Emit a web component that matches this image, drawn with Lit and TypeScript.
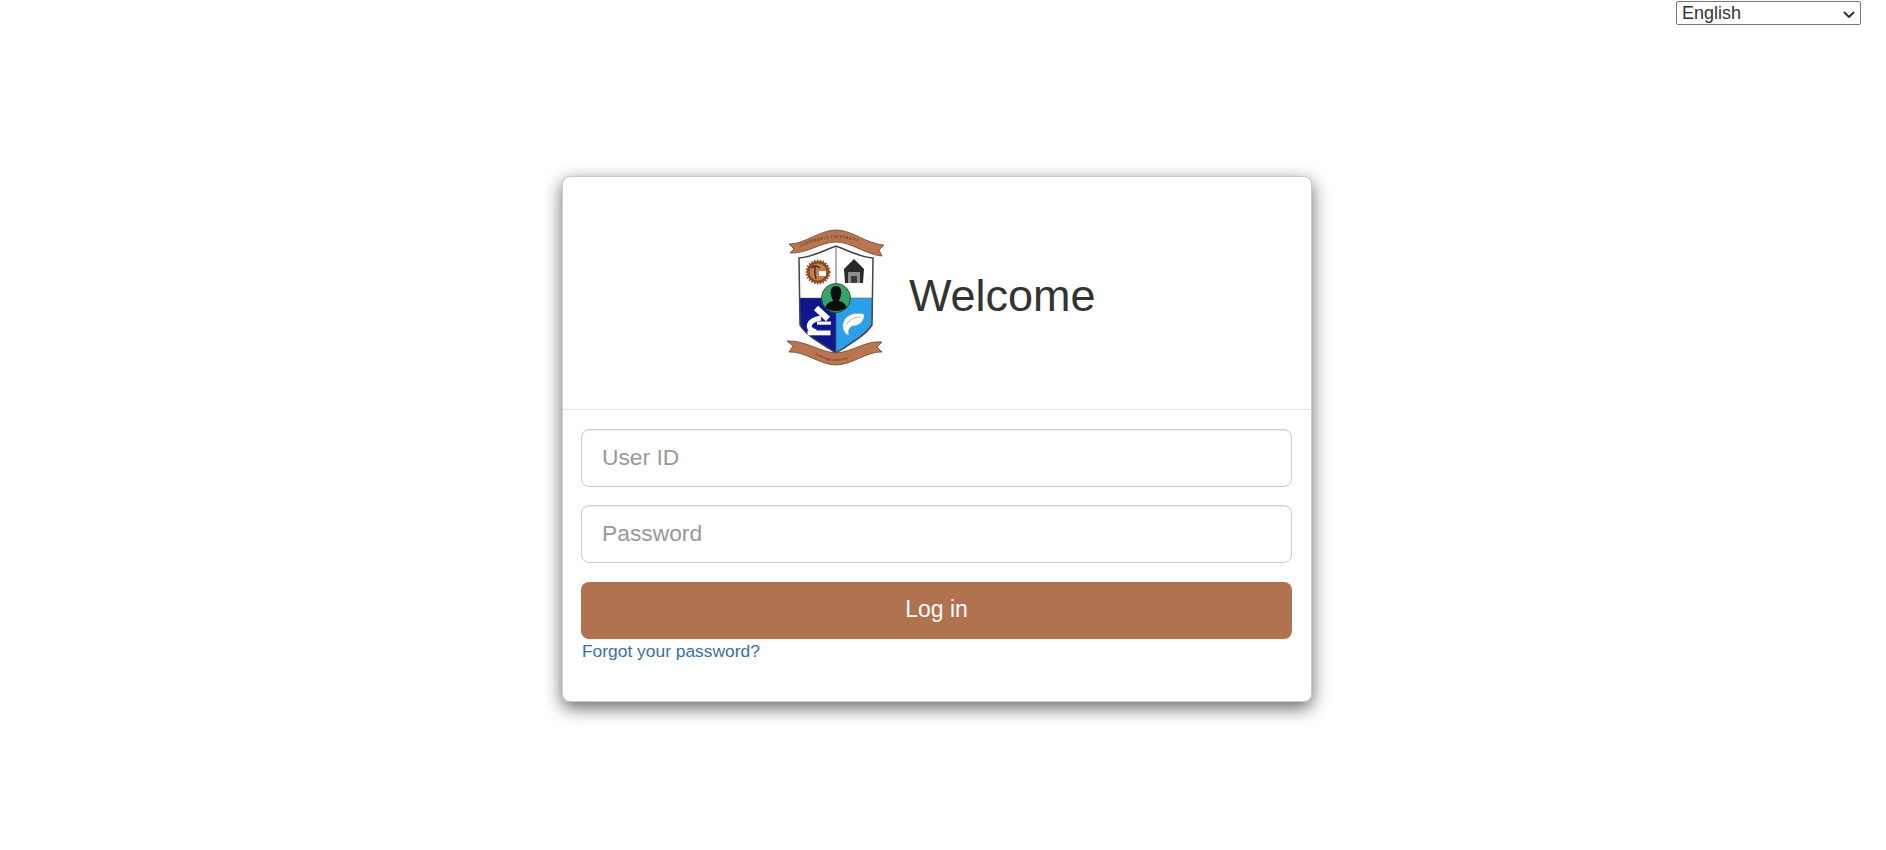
import { LitElement, html, css, svg } from "lit";
import { customElement } from "lit/decorators.js";

const SHIELD = "M14 30 C28 29 40 22 51 18 C62 22 74 29 88 30 L87 97 C80 108 66 115 51 125 C36 115 21 108 15 97 Z";

const logo = svg`
<svg class="logo" viewBox="0 0 104 142" aria-hidden="true">
  <defs>
    <filter id="soft" x="-5%" y="-5%" width="110%" height="110%"><feGaussianBlur stdDeviation="0.35"/></filter>
    <clipPath id="shield"><path d="${SHIELD}"/></clipPath>
    <path id="arcTop" d="M9 22 C24 15 38 10 51 10 C65 10 80 15 94 23"/>
    <path id="arcBot" d="M14 118 C26 124 38 133 51 133 C64 133 76 124 90 118"/>
  </defs>
  <g filter="url(#soft)">
    <path d="M4 16 C20 16 35 2 51 2 C67 2 82 16 99 17 L94 22 L97 28 C82 27 66 14 51 14 C36 14 22 26 5 25 L9 21 Z" fill="#b9744f" stroke="#6b4630" stroke-width="0.8"/>
    <text font-family="Liberation Serif, serif" font-size="4.2" fill="#4a2c1c" letter-spacing="0.4"><textPath href="#arcTop" startOffset="8%">COPPERBELT UNIVERSITY</textPath></text>
    <g clip-path="url(#shield)">
      <rect x="10" y="14" width="82" height="56" fill="#fff"/>
      <rect x="10" y="70" width="41" height="58" fill="#07188c"/>
      <rect x="51" y="70" width="41" height="58" fill="#2ba0ea"/>
    </g>
    <path d="${SHIELD}" fill="none" stroke="#444" stroke-width="1.5"/>
    <path d="M51 18 V125" stroke="#555" stroke-width="0.9" fill="none"/>
    <path d="M15 70 H87" stroke="#666" stroke-width="0.6"/>
    <circle cx="33" cy="44" r="11" fill="#8a4a25" stroke="#8a4a25" stroke-width="3" stroke-dasharray="1.5 1.3"/>
    <circle cx="33" cy="44" r="8.5" fill="#c08050"/>
    <rect x="34" y="43" width="7" height="5" fill="#fff"/>
    <path d="M26 40 Q30 36 35 40 M30 39 Q29 45 31 51" stroke="#4a2a14" stroke-width="1.5" fill="none"/>
    <path d="M69 31 L79 41 L78 55 H60 L59 41 Z" fill="#2c2c2c"/>
    <rect x="63" y="44" width="12" height="11" fill="#8e8e8e"/>
    <path d="M66 55 V48 H72 V55" fill="#3a3a3a"/>
    <path d="M31 80 L43 91" stroke="#fff" stroke-width="6" fill="none"/>
    <path d="M36 90 C23 92 20 101 31 104" stroke="#fff" stroke-width="5" fill="none"/>
    <rect x="32" y="93.5" width="14" height="3.2" fill="#fff"/>
    <rect x="22.5" y="102.5" width="23" height="4.8" fill="#fff"/>
    <path d="M58 101 C56 90 66 83 79 86 C80 92 75 98 68 98 C64 99 63 103 64 108 L60 105 Z" fill="#fff" stroke="#7c8f8a" stroke-width="0.6"/>
    <path d="M62 96 C65 91 70 89 75 89" stroke="#8a9a96" stroke-width="0.8" fill="none"/>
    <circle cx="51" cy="70" r="14.5" fill="#31a765" stroke="#3a3a3a" stroke-width="0.9"/>
    <path d="M51 58 C56 58 57 63 56 67 C55.5 70 54 72 54 73 C58 74 61 76 61.5 80 C55 84 47 84 40.5 80 C41 76 44 74 48 73 C48 72 46.5 70 46 67 C45 63 46 58 51 58 Z" fill="#0b0b0b"/>
    <path d="M2 113 C20 112 35 124 51 125 C67 124 82 112 97 114 L92 119 L97 124 C82 123 67 137 51 137 C35 137 20 123 4 124 L8 118 Z" fill="#b9744f" stroke="#6b4630" stroke-width="0.8"/>
    <text font-family="Liberation Serif, serif" font-size="3.6" fill="#4a2c1c"><textPath href="#arcBot" startOffset="22%">Knowledge and Service</textPath></text>
  </g>
</svg>`;

@customElement("app-root")
export class AppRoot extends LitElement {
  static styles = css`
    :host {
      display: block;
      height: 850px;
      overflow: hidden;
      background: #fff;
      font-family: "Liberation Sans", Arial, sans-serif;
      color: #333;
    }
    .lang {
      display: flex;
      justify-content: flex-end;
      padding: 1px 25px 0 0;
    }
    .picker {
      position: relative;
      width: 185px;
      height: 24px;
    }
    select {
      appearance: none;
      box-sizing: border-box;
      width: 100%;
      height: 100%;
      padding: 0 0 0 5px;
      font: 18px "Liberation Sans", Arial, sans-serif;
      color: #333;
      background: #fff;
      border: 1px solid #767676;
      border-radius: 2px;
    }
    .chevron {
      position: absolute;
      top: 10px;
      right: 6px;
      width: 12px;
      height: 7px;
      pointer-events: none;
    }
    .wrap {
      padding: 151px 0 0 562px;
    }
    .card {
      width: 748px;
      height: 524px;
      border: 1px solid rgba(0, 0, 0, 0.2);
      border-radius: 8px;
      background: #fff;
      box-shadow: 0 6px 18px rgba(0, 0, 0, 0.6);
      display: flex;
      flex-direction: column;
    }
    .head {
      height: 232px;
      border-bottom: 1px solid #e5e5e5;
      display: flex;
      align-items: center;
      justify-content: center;
      gap: 20px;
    }
    .logo {
      width: 104px;
      height: 142px;
      display: block;
      margin: 12px 0 0 6.5px;
    }
    h1 {
      margin: 5px 0 0;
      font-size: 45px;
      font-weight: 400;
      color: #333;
    }
    .body {
      padding: 19px 19px 0 18px;
      display: flex;
      flex-direction: column;
    }
    input {
      box-sizing: border-box;
      width: 100%;
      height: 58px;
      margin-bottom: 18px;
      padding: 0 20px 2px;
      border: 1px solid #ccc;
      border-radius: 8px;
      font: 22.8px "Liberation Sans", Arial, sans-serif;
      color: #555;
      background: #fff;
      box-shadow: inset 0 1px 1px rgba(0, 0, 0, 0.075);
      outline: none;
    }
    input::placeholder {
      color: #999;
      opacity: 1;
    }
    button {
      height: 57px;
      margin-top: 1px;
      border: 0;
      border-radius: 8px;
      background: #b1724f;
      color: #fff;
      font: 23px "Liberation Sans", Arial, sans-serif;
      padding: 0 0 2px;
    }
    a {
      display: block;
      margin: 2px 0 0 1px;
      font-size: 17.4px;
      line-height: 20px;
      color: #3a6ea5;
      text-decoration: none;
    }
  `;

  render() {
    return html`
      <div class="lang">
        <div class="picker">
          <select><option>English</option></select>
          <svg class="chevron" viewBox="0 0 12 7" aria-hidden="true">
            <path d="M1 1 L6 6 L11 1" fill="none" stroke="#333" stroke-width="2"/>
          </svg>
        </div>
      </div>
      <div class="wrap">
        <div class="card">
          <div class="head">
            ${logo}
            <h1>Welcome</h1>
          </div>
          <div class="body">
            <input type="text" placeholder="User ID" />
            <input type="password" placeholder="Password" />
            <button type="button">Log in</button>
            <a href="#">Forgot your password?</a>
          </div>
        </div>
      </div>
    `;
  }
}
